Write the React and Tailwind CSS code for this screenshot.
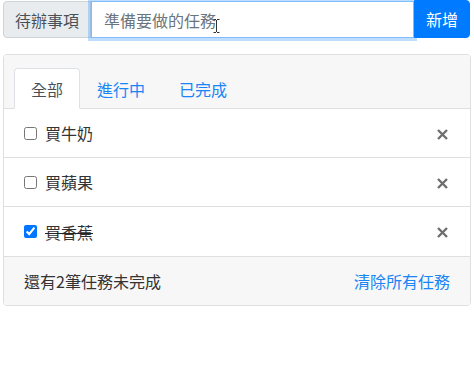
import React, { useState } from "react";

const font = { fontFamily: '"Noto Sans CJK TC", "Noto Sans", sans-serif' };

function CloseIcon() {
  return (
    <svg width="11" height="11" viewBox="0 0 11 11">
      <path d="M1 1L10 10M10 1L1 10" stroke="#6f6f6f" strokeWidth="2.4" strokeLinecap="butt" />
    </svg>
  );
}

function TodoRow({ text, done, last }) {
  return (
    <li
      className={`flex items-center h-[49px] px-5 bg-white ${
        last ? "" : "border-b border-[#dfdfdf]"
      }`}
    >
      <input
        type="checkbox"
        defaultChecked={done}
        className="w-[13px] h-[13px] mr-2 accent-[#0075ff]"
      />
      {done ? (
        <span className="relative text-base leading-6 text-[#333] after:absolute after:left-0 after:right-0 after:top-[13px] after:h-px after:bg-[#212529]">
          {text}
        </span>
      ) : (
        <span className="text-base leading-6 text-[#333]">{text}</span>
      )}
      <button className="ml-auto mr-[2px] mt-[2px] flex items-center">
        <CloseIcon />
      </button>
    </li>
  );
}

export default function App() {
  const [tab, setTab] = useState("all");
  const tabs = [
    { key: "all", label: "全部" },
    { key: "doing", label: "進行中" },
    { key: "done", label: "已完成" },
  ];
  const todos = [
    { text: "買牛奶", done: false },
    { text: "買蘋果", done: false },
    { text: "買香蕉", done: true },
  ];

  return (
    <div className="px-[3px] pt-px bg-white min-h-[372px]" style={font}>
      {/* input group */}
      <div className="flex h-[37px] pr-px">
        <span className="flex items-center justify-center w-[88px] bg-[#e9ecef] text-[#495057] border border-[#ced4da] rounded-l text-base">
          待辦事項
        </span>
        <div className="relative flex-1 flex">
          <input
            className="flex-1 px-3 border border-[#80bdff] shadow-[0_0_0_3px_rgba(0,123,255,0.25)] outline-none text-base text-[#495057] placeholder:text-[#6c757d] bg-white relative z-10"
            placeholder="準備要做的任務"
          />
          <svg
            className="absolute left-[122px] top-[18px] z-20"
            width="7"
            height="14"
            viewBox="0 0 7 14"
          >
            <path d="M0.5 0.5h2.5M4 0.5h2.5M3.5 1v12M0.5 13.5h2.5M4 13.5h2.5" stroke="#333" strokeWidth="1" fill="none" />
          </svg>
        </div>
        <button className="w-[56px] flex items-center justify-center bg-[#007bff] text-white text-base rounded-r border border-[#007bff] -mt-px h-[38px]">
          新增
        </button>
      </div>

      {/* card */}
      <div className="mt-4 border border-[#dfdfdf] rounded overflow-hidden">
        <div className="bg-[#f7f7f7] border-b border-[#dfdfdf] pt-[13px] px-[10px]">
          <ul className="flex -mb-px">
            {tabs.map((t) => (
              <li key={t.key}>
                <button
                  onClick={() => setTab(t.key)}
                  className={`h-[41px] px-4 leading-6 text-base border rounded-t ${
                    tab === t.key
                      ? "bg-white border-[#dee2e6] border-b-white text-[#495057]"
                      : "border-transparent text-[#1a85f5]"
                  }`}
                >
                  {t.label}
                </button>
              </li>
            ))}
          </ul>
        </div>
        <ul>
          {todos.map((t, i) => (
            <TodoRow key={t.text} text={t.text} done={t.done} last={i === todos.length - 1} />
          ))}
        </ul>
        <div className="flex items-center justify-between h-[49px] px-5 bg-[#f7f7f7] border-t border-[#dfdfdf] text-base">
          <span className="text-[#333]">還有2筆任務未完成</span>
          <a href="#" className="text-[#1a85f5]">
            清除所有任務
          </a>
        </div>
      </div>
    </div>
  );
}
